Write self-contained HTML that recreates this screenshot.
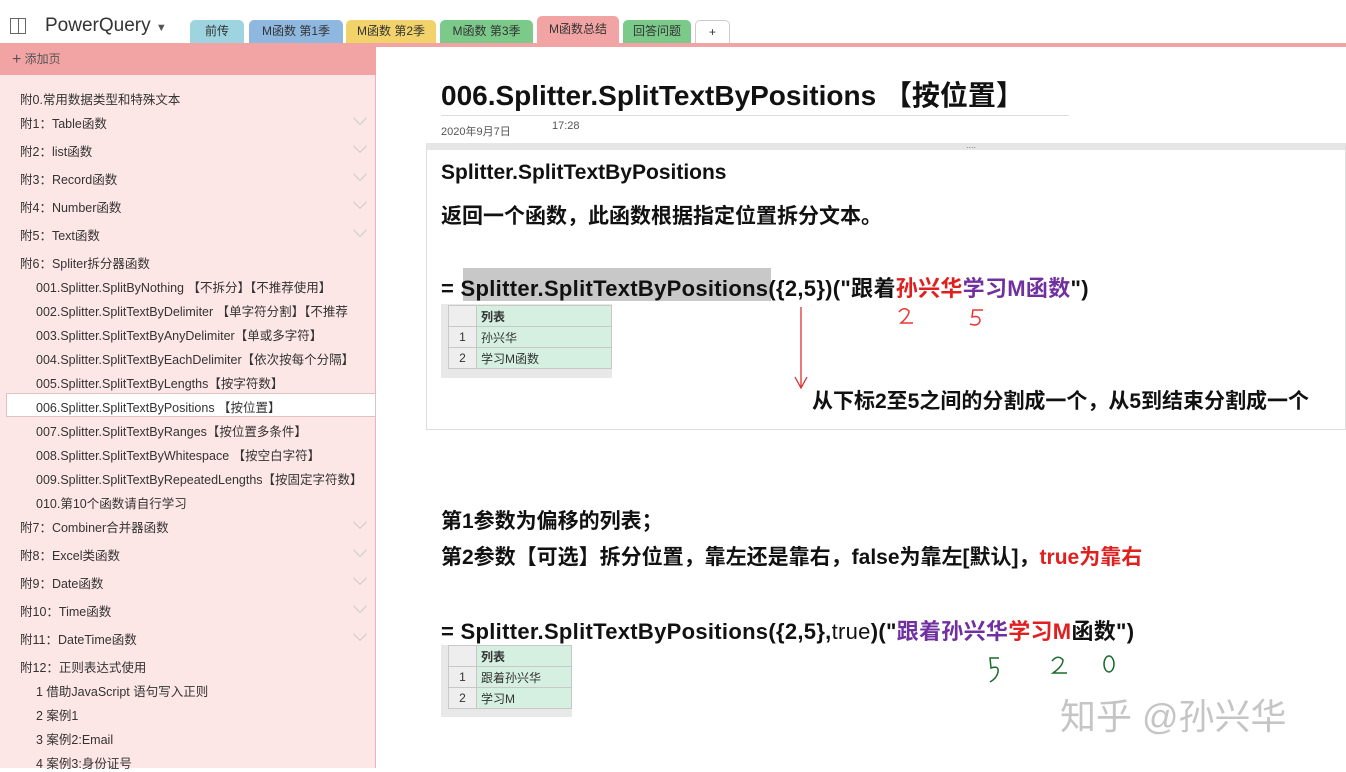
<!DOCTYPE html>
<html><head><meta charset="utf-8"><style>
*{margin:0;padding:0;box-sizing:border-box}
body{width:1346px;height:768px;overflow:hidden;background:#fff;font-family:"Liberation Sans","Noto Sans CJK SC",sans-serif;position:relative;color:#222}
.abs{position:absolute}
.tab{position:absolute;top:20px;height:23px;border-radius:5px 5px 0 0;font-size:12px;text-align:center;line-height:23px;color:#333}
#side{left:0;top:47px;width:376px;height:721px;background:#fde6e6;border-right:1px solid #e9b5b5}
#hdr{left:0;top:47px;width:376px;height:28px;background:#f2a4a4;font-size:12px;color:#555;line-height:24px;padding-left:12px}
.it{position:absolute;font-size:12.5px;color:#333;white-space:nowrap}
.chev{position:absolute;left:355px;width:10px;height:10px;border-right:1px solid #ccc;border-bottom:1px solid #ccc;transform:rotate(45deg)}
.b{font-weight:bold;font-family:"Liberation Sans","Noto Sans CJK SC",sans-serif;color:#111;white-space:nowrap}
table{border-collapse:collapse;font-size:12px}
td{border:1px solid #c8c8c8;height:21px;padding:0 4px;color:#333}
</style></head><body>
<div class="abs" style="left:0;top:0;width:1346px;height:44px;background:#fff"></div>
<div class="abs" style="left:10px;top:18px;width:16px;height:16px;border:1px solid #666"></div>
<div class="abs" style="left:18px;top:18px;width:1px;height:16px;background:#666"></div>
<div class="abs" style="left:45px;top:15px;font-size:19px;color:#333">PowerQuery <span style="font-size:11px;color:#555">▼</span></div>
<div class="tab" style="left:190px;width:54px;background:#9ed3e0">前传</div>
<div class="tab" style="left:249px;width:94px;background:#8fb8e0">M函数 第1季</div>
<div class="tab" style="left:346px;width:90px;background:#f2d36b">M函数 第2季</div>
<div class="tab" style="left:440px;width:93px;background:#7cca8a">M函数 第3季</div>
<div class="tab" style="left:537px;width:82px;top:16px;height:28px;background:#f2a4a4;line-height:26px">M函数总结</div>
<div class="tab" style="left:623px;width:68px;background:#7cca8a">回答问题</div>
<div class="tab" style="left:695px;width:35px;background:#fff;border:1px solid #ccc;border-bottom:none">+</div>
<div class="abs" style="left:0;top:43px;width:1346px;height:4px;background:#f2a4a4"></div>
<div class="abs" id="side"></div>
<div class="abs" id="hdr"><span style="font-size:16px;vertical-align:-1px">+</span> 添加页</div>
<div class="it" style="left:20px;top:89px">附0.常用数据类型和特殊文本</div>
<div class="it" style="left:20px;top:113px">附1：Table函数</div><div class="chev" style="top:113px"></div>
<div class="it" style="left:20px;top:141px">附2：list函数</div><div class="chev" style="top:141px"></div>
<div class="it" style="left:20px;top:169px">附3：Record函数</div><div class="chev" style="top:169px"></div>
<div class="it" style="left:20px;top:197px">附4：Number函数</div><div class="chev" style="top:197px"></div>
<div class="it" style="left:20px;top:225px">附5：Text函数</div><div class="chev" style="top:225px"></div>
<div class="it" style="left:20px;top:253px">附6：Spliter拆分器函数</div>
<div class="it" style="left:36px;top:277px">001.Splitter.SplitByNothing 【不拆分】【不推荐使用】</div>
<div class="it" style="left:36px;top:301px">002.Splitter.SplitTextByDelimiter 【单字符分割】【不推荐</div>
<div class="it" style="left:36px;top:325px">003.Splitter.SplitTextByAnyDelimiter【单或多字符】</div>
<div class="it" style="left:36px;top:349px">004.Splitter.SplitTextByEachDelimiter【依次按每个分隔】</div>
<div class="it" style="left:36px;top:373px">005.Splitter.SplitTextByLengths【按字符数】</div>
<div class="abs" style="left:6px;top:393px;width:370px;height:24px;background:#fff;border:1px solid #e0c0c0"></div>
<div class="it" style="left:36px;top:397px">006.Splitter.SplitTextByPositions 【按位置】</div>
<div class="it" style="left:36px;top:421px">007.Splitter.SplitTextByRanges【按位置多条件】</div>
<div class="it" style="left:36px;top:445px">008.Splitter.SplitTextByWhitespace 【按空白字符】</div>
<div class="it" style="left:36px;top:469px">009.Splitter.SplitTextByRepeatedLengths【按固定字符数】</div>
<div class="it" style="left:36px;top:493px">010.第10个函数请自行学习</div>
<div class="it" style="left:20px;top:517px">附7：Combiner合并器函数</div><div class="chev" style="top:517px"></div>
<div class="it" style="left:20px;top:545px">附8：Excel类函数</div><div class="chev" style="top:545px"></div>
<div class="it" style="left:20px;top:573px">附9：Date函数</div><div class="chev" style="top:573px"></div>
<div class="it" style="left:20px;top:601px">附10：Time函数</div><div class="chev" style="top:601px"></div>
<div class="it" style="left:20px;top:629px">附11：DateTime函数</div><div class="chev" style="top:629px"></div>
<div class="it" style="left:20px;top:657px">附12：正则表达式使用</div>
<div class="it" style="left:36px;top:681px">1 借助JavaScript 语句写入正则</div>
<div class="it" style="left:36px;top:705px">2 案例1</div>
<div class="it" style="left:36px;top:729px">3 案例2:Email</div>
<div class="it" style="left:36px;top:753px">4 案例3:身份证号</div>

<div class="abs b" style="left:441px;top:74px;font-size:28px">006.Splitter.SplitTextByPositions 【按位置】</div>
<div class="abs" style="left:441px;top:115px;width:628px;height:1px;background:#ddd"></div>
<div class="abs" style="left:441px;top:123px;font-size:11px;color:#555">2020年9月7日</div>
<div class="abs" style="left:552px;top:120px;font-size:11px;color:#555">17:28</div>
<div class="abs" style="left:426px;top:143px;width:920px;height:287px;border:1px solid #ddd;border-top:7px solid #e6e6e6"></div>
<div class="abs" style="left:966px;top:140px;font-size:9px;color:#777">....</div>
<div class="abs b" style="left:441px;top:161px;font-size:21px">Splitter.SplitTextByPositions</div>
<div class="abs b" style="left:441px;top:200px;font-size:21px">返回一个函数，此函数根据指定位置拆分文本。</div>
<div class="abs" style="left:463px;top:268px;width:308px;height:33px;background:#c8c8c8"></div>
<div class="abs b" style="left:441px;top:271px;font-size:22px;letter-spacing:0.3px">= Splitter.SplitTextByPositions({2,5})("跟着<span style="color:#e0201e">孙兴华</span><span style="color:#7030a0">学习M函数</span>")</div>
<div class="abs" style="left:441px;top:304px;width:171px;height:74px;background:#e8e8e8"></div>
<table class="abs" style="left:448px;top:305px;width:164px"><tr><td style="width:28px;background:#eee"></td><td style="background:#d5f0e0;font-weight:bold">列表</td></tr><tr><td style="text-align:center;background:#eee">1</td><td style="background:#d5f0e0">孙兴华</td></tr><tr><td style="text-align:center;background:#eee">2</td><td style="background:#d5f0e0">学习M函数</td></tr></table>
<svg class="abs" style="left:0;top:0" width="1346" height="768"><path d="M801 307V388M795 377l6 11 6-11" stroke="#d33" fill="none" stroke-width="1.3"/>
<path d="M899 312q5-6 10-1q0 5-8 12h12" stroke="#e33" fill="none" stroke-width="1.5"/>
<path d="M983 310h-10l-1 7q8-2 8 4q-2 6-10 3" stroke="#e33" fill="none" stroke-width="1.5"/>
<path d="M999 658h-9l1 10q8-3 7 4q-1 6-8 10" stroke="#1a6b2a" fill="none" stroke-width="1.5"/>
<path d="M1052 661q6-7 11-1q0 6-10 13h14" stroke="#1a6b2a" fill="none" stroke-width="1.5"/>
<ellipse cx="1109" cy="664" rx="5" ry="8" stroke="#1a6b2a" fill="none" stroke-width="1.5"/></svg>
<div class="abs b" style="left:812px;top:385px;font-size:21px">从下标2至5之间的分割成一个，从5到结束分割成一个</div>
<div class="abs b" style="left:441px;top:505px;font-size:21px">第1参数为偏移的列表；</div>
<div class="abs b" style="left:441px;top:541px;font-size:21px">第2参数【可选】拆分位置，靠左还是靠右，false为靠左[默认]，<span style="color:#e0201e">true为靠右</span></div>
<div class="abs b" style="left:441px;top:614px;font-size:22px;letter-spacing:0.3px">= Splitter.SplitTextByPositions({2,5},<span style="font-weight:normal">true</span>)("<span style="color:#7030a0">跟着孙兴华</span><span style="color:#e0201e">学习M</span>函数")</div>
<div class="abs" style="left:441px;top:645px;width:131px;height:72px;background:#e8e8e8"></div>
<table class="abs" style="left:448px;top:645px;width:124px"><tr><td style="width:28px;background:#eee"></td><td style="background:#d5f0e0;font-weight:bold">列表</td></tr><tr><td style="text-align:center;background:#eee">1</td><td style="background:#d5f0e0">跟着孙兴华</td></tr><tr><td style="text-align:center;background:#eee">2</td><td style="background:#d5f0e0">学习M</td></tr></table>
<div class="abs" style="left:1060px;top:688px;font-size:36px;color:rgba(150,150,150,0.55);font-family:'Liberation Sans','Noto Sans CJK SC',sans-serif">知乎 @孙兴华</div>
</body></html>
